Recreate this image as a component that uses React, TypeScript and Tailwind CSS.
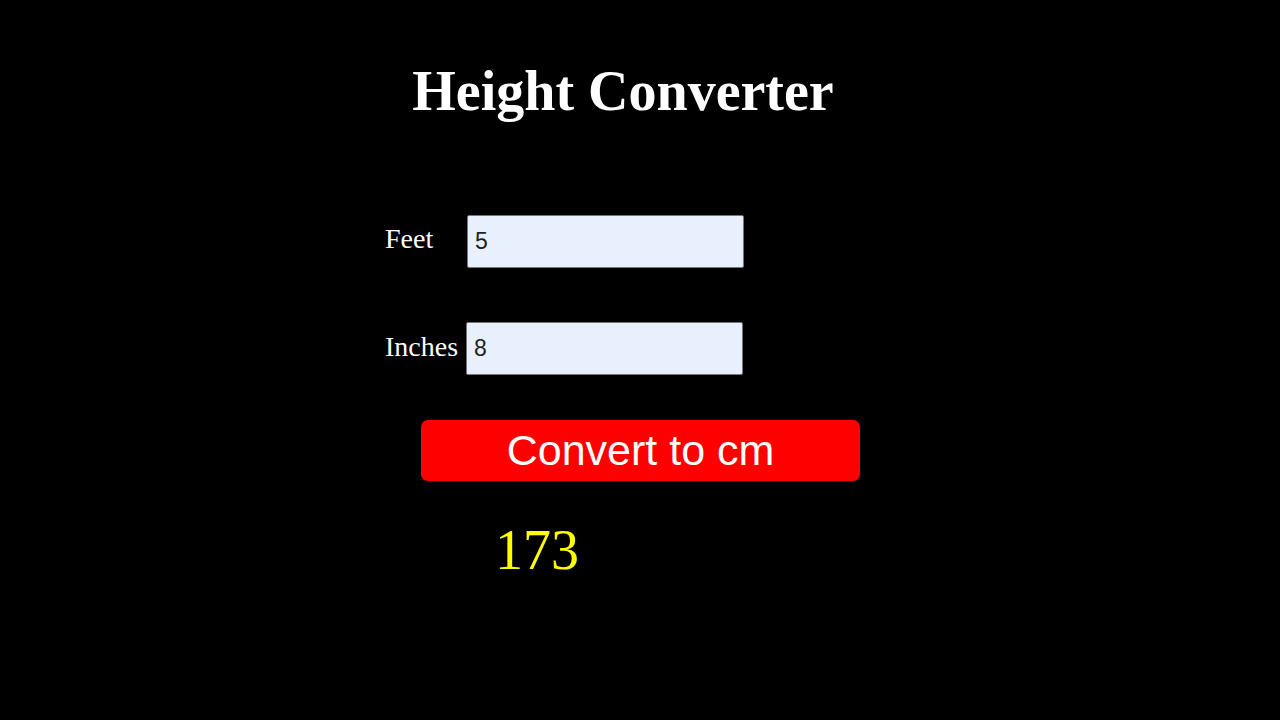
import { useState } from "react";

export default function App() {
  const [feet, setFeet] = useState("5");
  const [inches, setInches] = useState("8");
  const [result, setResult] = useState("173");

  const convert = () => {
    const total = (Number(feet) || 0) * 12 + (Number(inches) || 0);
    setResult(String(Math.round(total * 2.54)));
  };

  return (
    <main className="min-h-screen w-full bg-black font-['Liberation_Serif',serif] text-white">
      <div className="ml-[385px] w-[476px] pt-[59px]">
        <h1 className="text-center text-[56px] font-bold leading-[64px]">Height Converter</h1>

        <div className="mt-[92px] flex items-center">
          <label className="w-[82px] pb-[5px] text-[28px] leading-[32px]">Feet</label>
          <input
            value={feet}
            onChange={(e) => setFeet(e.target.value)}
            className="h-[53px] w-[277px] rounded-[2px] border border-[#767676] bg-[#e8f0fe] px-[7px] font-['Liberation_Sans',Arial,sans-serif] text-[23px] text-[#222] outline-none"
          />
        </div>

        <div className="mt-[54px] flex items-center">
          <label className="w-[81px] pb-[3px] text-[28px] leading-[32px]">Inches</label>
          <input
            value={inches}
            onChange={(e) => setInches(e.target.value)}
            className="h-[53px] w-[277px] rounded-[2px] border border-[#767676] bg-[#e8f0fe] px-[7px] font-['Liberation_Sans',Arial,sans-serif] text-[23px] text-[#222] outline-none"
          />
        </div>

        <button
          onClick={convert}
          className="ml-[36px] mt-[45px] flex h-[61px] w-[439px] items-center justify-center rounded-[7px] bg-[#ff0000] font-['Liberation_Sans',Arial,sans-serif] text-[43px] leading-none text-white"
        >
          Convert to cm
        </button>

        <div className="ml-[110px] mt-[37px] text-[56px] leading-[64px] text-[#ffff00]">{result}</div>
      </div>
    </main>
  );
}
